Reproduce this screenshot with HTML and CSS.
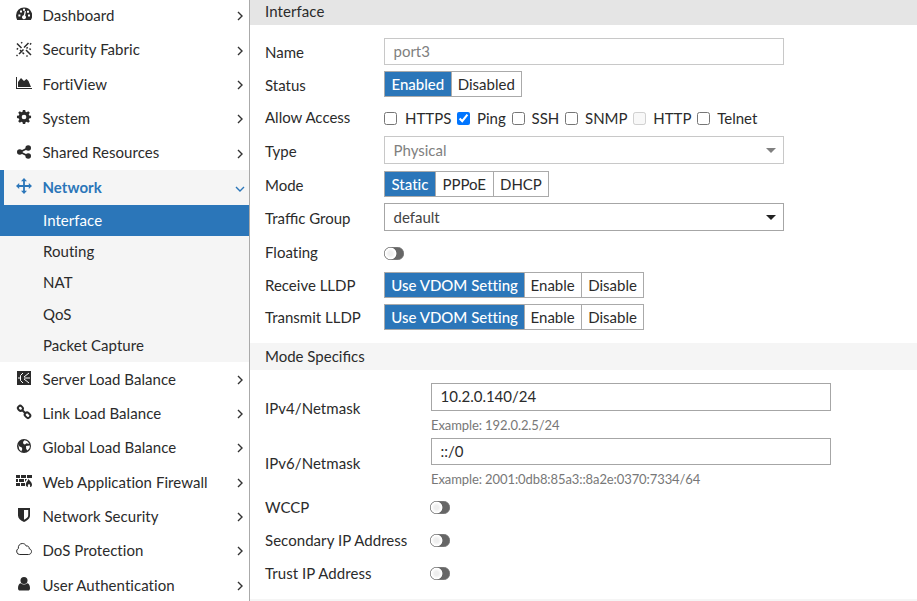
FILE: index.html
```html
<!DOCTYPE html>
<html lang="en">
<head>
<meta charset="utf-8">
<title>Interface</title>
<link rel="stylesheet" href="styles.css">
</head>
<body>
<div class="app">
<nav class="sidebar">
  <a class="item"><svg class="icon" viewBox="0 0 16 16"><path fill-rule="evenodd" d="M8 1.500a8 8 0 0 0-8 8c0 1.700.4 3.100 1.200 4.500h13.600A8 8 0 0 0 8 1.500zM2.400 8.400h2v2h-2zM4 4.500h2v2H4zM7 2.800h2v2H7zM11 4.800h2v2h-2zM12 8.600h2v2h-2zM8.700 5l1.300.3-.9 4.200a2 2 0 1 1-1.300-.3z"/></svg><span class="text">Dashboard</span><svg class="chev" viewBox="0 0 8 10"><path d="M2 1l4 4-4 4"/></svg></a>
  <a class="item"><svg class="icon line" viewBox="0 0 16 16"><path d="M1 2.500l4.500 4.500M8 6.500l4.500-4.500M10 9l5 5M3 13l4.500-4.500M5.200 1.200l1 1M14 3.500l1.200-1.200M.8 8.500l1.200-1.200M10.500 7.500l1.200-1.200M13.500 7.500l1.200 1.200M4 10l1-1M6.500 11.500l1.500 1.500M10.500 14.500l1 1M.5 15l1-1"/></svg><span class="text">Security Fabric</span><svg class="chev" viewBox="0 0 8 10"><path d="M2 1l4 4-4 4"/></svg></a>
  <a class="item"><svg class="icon" viewBox="0 0 16 16"><path d="M0 2h1v11h15v1H0zM2 12V7l3-4 3 3 2.500-2 2 2L15 12z"/></svg><span class="text">FortiView</span><svg class="chev" viewBox="0 0 8 10"><path d="M2 1l4 4-4 4"/></svg></a>
  <a class="item"><svg class="icon" viewBox="0 0 16 16"><path fill-rule="evenodd" d="M6.800 1h2.400l.4 2 1.200.5 1.700-1.200 1.700 1.700L13 5.700l.5 1.200 2 .4v2.400l-2 .4-.5 1.200 1.200 1.700-1.700 1.700-1.700-1.200-1.200.5-.4 2H6.800l-.4-2-1.200-.5-1.700 1.200L1.800 13 3 11.300l-.5-1.200-2-.4V7.300l2-.4L3 5.700 1.800 4l1.700-1.700 1.700 1.200L6.400 3zM8 6a2.500 2.500 0 1 0 0 5 2.500 2.500 0 0 0 0-5z" transform="translate(.5 0) scale(.94)"/></svg><span class="text">System</span><svg class="chev" viewBox="0 0 8 10"><path d="M2 1l4 4-4 4"/></svg></a>
  <a class="item"><svg class="icon" viewBox="0 0 16 16"><circle cx="3.800" cy="8" r="2.800"/><circle cx="12.200" cy="4" r="2.800"/><circle cx="12.200" cy="12" r="2.800"/><path class="bar" d="M12 4L4 8l8 4"/></svg><span class="text">Shared Resources</span><svg class="chev" viewBox="0 0 8 10"><path d="M2 1l4 4-4 4"/></svg></a>
  <a class="item current"><svg class="icon" viewBox="0 0 16 16"><path d="M8 0l3 3.200H8.900v3.900h3.900V5L16 8l-3.200 3V8.900H8.900v3.900H11L8 16l-3-3.200h2.100V8.900H3.200V11L0 8l3.200-3v2.100h3.900V3.200H5z"/></svg><span class="text">Network</span><svg class="chev down" viewBox="0 0 10 8"><path d="M1 2l4 4 4-4"/></svg></a>
  <div class="sub">
    <a class="subitem active">Interface</a>
    <a class="subitem">Routing</a>
    <a class="subitem">NAT</a>
    <a class="subitem">QoS</a>
    <a class="subitem">Packet Capture</a>
  </div>
  <a class="item"><svg class="icon" viewBox="0 0 16 16"><path d="M1 1h14v14H1z"/><path class="cut" d="M2 8h2M8 8h6M8 7l5-4M8 9l5 4M7 3L4.500 5.500v5L7 13"/></svg><span class="text">Server Load Balance</span><svg class="chev" viewBox="0 0 8 10"><path d="M2 1l4 4-4 4"/></svg></a>
  <a class="item"><svg class="icon ring" viewBox="0 0 16 16"><rect x="-2.500" y="-2.200" width="5" height="4.400" rx="2" transform="translate(4.400 4.300) rotate(45)"/><rect x="-2.900" y="-2.200" width="5.800" height="4.400" rx="2" transform="translate(11.500 11.200) rotate(45)"/><path d="M6 6l4 3.800"/></svg><span class="text">Link Load Balance</span><svg class="chev" viewBox="0 0 8 10"><path d="M2 1l4 4-4 4"/></svg></a>
  <a class="item"><svg class="icon" viewBox="0 0 16 16"><circle cx="8" cy="8" r="7"/><path class="land" d="M8.500 2.200l2.500.7 2.300 2.600-1 .3-1.800-.6-1.500 1.300-1.500-.5-.5-2zM2.200 6l1 2.300 2.600 1.200.5 1.500-1 2.400-2.100-2.200zM10 8l3.900-.6-.3 2.600-2 2.600-1.400-1.600z"/></svg><span class="text">Global Load Balance</span><svg class="chev" viewBox="0 0 8 10"><path d="M2 1l4 4-4 4"/></svg></a>
  <a class="item"><svg class="icon" viewBox="0 0 16 16"><path d="M0 2h4v3H0zM5 2h5v3H5zM11 2h5v3h-5zM0 6h2v3H0zM3 6h5v3H3zM0 10h4v3H0zM5 10h4v3H5zM9 6h2l-2 3z"/><path fill-rule="evenodd" d="M12.500 5.500c.3 2 3.500 3.300 3.500 6.200 0 1.500-.9 2.300-2 2.300.5-1.200 0-2.400-1-3.200-1 1-1.500 2-1 3.200-1.300-.2-2.200-1-2.200-2.500 0-2.500 2.500-3.500 2.700-6z"/></svg><span class="text">Web Application Firewall</span><svg class="chev" viewBox="0 0 8 10"><path d="M2 1l4 4-4 4"/></svg></a>
  <a class="item"><svg class="icon" viewBox="0 0 16 16"><path fill-rule="evenodd" d="M2 1h12v7.500c0 3-2.500 5-6 6.500-3.500-1.500-6-3.500-6-6.500zM8 3v9.800c2.500-1.200 4.200-2.500 4.200-4.500V3z"/></svg><span class="text">Network Security</span><svg class="chev" viewBox="0 0 8 10"><path d="M2 1l4 4-4 4"/></svg></a>
  <a class="item"><svg class="icon cloud" viewBox="0 0 16 16"><path d="M3.800 13.500a3.200 3.200 0 0 1-1.500-6C2 4.500 4 2.500 6.300 2.500c1.900 0 3.400 1 4 2.600 1.700-.5 3.100.8 2.800 2.500 1.400.4 2.400 1.500 2.400 2.900 0 1.700-1.300 3-3 3z"/></svg><span class="text">DoS Protection</span><svg class="chev" viewBox="0 0 8 10"><path d="M2 1l4 4-4 4"/></svg></a>
  <a class="item"><svg class="icon" viewBox="0 0 16 16"><circle cx="8" cy="4.500" r="3.500"/><path d="M4.800 7.200c1.800 1.700 4.600 1.700 6.400 0 2 .4 2.800 2.500 2.800 5 0 1.500-.8 2.300-2 2.300H4c-1.200 0-2-.8-2-2.300 0-2.500.8-4.600 2.800-5z"/></svg><span class="text">User Authentication</span><svg class="chev" viewBox="0 0 8 10"><path d="M2 1l4 4-4 4"/></svg></a>
</nav>
<main class="main">
  <h1 class="title">Interface</h1>
  <form class="form">
    <div class="row"><label class="label">Name</label><div class="box short muted">port3</div></div>
    <div class="row"><label class="label">Status</label><div class="group raised"><span class="opt on">Enabled</span><span class="opt">Disabled</span></div></div>
    <div class="row"><label class="label high">Allow Access</label><div class="checks">
      <label class="check"><input type="checkbox">HTTPS</label>
      <label class="check"><input type="checkbox" checked>Ping</label>
      <label class="check"><input type="checkbox">SSH</label>
      <label class="check"><input type="checkbox">SNMP</label>
      <label class="check"><input type="checkbox" disabled>HTTP</label>
      <label class="check"><input type="checkbox">Telnet</label>
    </div></div>
    <div class="row"><label class="label">Type</label><div class="box muted select raised">Physical<i class="caret"></i></div></div>
    <div class="row mode"><label class="label">Mode</label><div class="group"><span class="opt on">Static</span><span class="opt">PPPoE</span><span class="opt">DHCP</span></div></div>
    <div class="row"><label class="label liga">Traffic Group</label><div class="box select soft raised">default<i class="caret"></i></div></div>
    <div class="row floating"><label class="label">Floating</label><span class="toggle"></span></div>
    <div class="row lldp"><label class="label high">Receive LLDP</label><div class="group"><span class="opt on">Use VDOM Setting</span><span class="opt">Enable</span><span class="opt">Disable</span></div></div>
    <div class="row lldp"><label class="label high">Transmit LLDP</label><div class="group"><span class="opt on">Use VDOM Setting</span><span class="opt">Enable</span><span class="opt">Disable</span></div></div>
  </form>
  <h2 class="subtitle liga">Mode Specifics</h2>
  <form class="form specifics">
    <div class="row address"><label class="label">IPv4/Netmask</label><div class="field"><div class="box value">10.2.0.140/24</div><p class="hint">Example: 192.0.2.5/24</p></div></div>
    <div class="row address v6"><label class="label">IPv6/Netmask</label><div class="field"><div class="box short">::/0</div><p class="hint">Example: 2001:0db8:85a3::8a2e:0370:7334/64</p></div></div>
    <div class="row"><label class="label high">WCCP</label><span class="toggle"></span></div>
    <div class="row"><label class="label high">Secondary IP Address</label><span class="toggle"></span></div>
    <div class="row"><label class="label high">Trust IP Address</label><span class="toggle"></span></div>
  </form>
  <div class="footer"></div>
</main>
</div>
</body>
</html>
```
FILE: styles.css
```css
* { box-sizing: border-box; }
body { margin: 0; background: #fff; color: #2b2b2b; font: 15px/20px Lato, "Liberation Sans", sans-serif; font-variant-ligatures: none; }
.liga { font-variant-ligatures: common-ligatures; }
.app { display: flex; height: 601px; overflow: hidden; }

.sidebar { width: 250px; flex: none; border-right: 1px solid #aaa; margin-top: -2px; }
.item { display: flex; align-items: center; height: 34.35px; padding: 0 5px 0 16px; }
.icon { width: 16px; height: 16px; margin-right: 10.5px; margin-top: -2px; fill: #2b2b2b; flex: none; }
.item .text { flex: 1; padding-bottom: .12px; letter-spacing: .05px; }
.chev { width: 8px; height: 10px; margin-top: 2px; fill: none; stroke: #333; stroke-width: 1.4; }
.chev.down { width: 10px; height: 8px; margin-top: 3px; margin-right: -1px; stroke: #2b76b9; }
.icon.line { fill: none; stroke: #2b2b2b; stroke-width: 1.5; }
.icon .bar { fill: none; stroke: #2b2b2b; stroke-width: 1.8; }
.icon .cut { fill: none; stroke: #fff; stroke-width: 1; }
.icon.ring { fill: none; stroke: #2b2b2b; stroke-width: 2; }
.icon .land { fill: #fff; }
.icon.cloud { fill: none; stroke: #2b2b2b; stroke-width: 1; }
.current { height: 35px; padding-left: 12px; border-left: 4px solid #2b76b9; background: #f5f5f5; color: #2b76b9; font-weight: 700; }
.current .icon { fill: #2b76b9; }
.sub { padding-bottom: .35px; background: #f5f5f5; }
.subitem { display: block; height: 31.3px; padding-left: 43px; line-height: 31.3px; letter-spacing: .05px; }
.subitem.active { background: #2b76b9; color: #fff; }

.main { flex: 1; }
.title, .subtitle { margin: 0; padding-left: 15px; font-size: 15px; font-weight: 400; }
.title { height: 25px; line-height: 23px; background: #e5e5e5; letter-spacing: .08px; }
.subtitle { height: 27px; line-height: 27px; background: #f5f5f5; }
.form { padding: 10px 0 10px 15px; }
.row { display: flex; align-items: center; height: 33px; }
.label { width: 119px; flex: none; padding-top: 1px; }
.label.high { padding: 0 0 1px; }
.mode { height: 34px; }
.floating { height: 35px; }
.lldp { height: 32px; }
.box { width: 400px; height: 28px; padding: 0 9px 0 8.500px; border: 1px solid #a6a6a6; line-height: 26px; }
.box.short { height: 27px; line-height: 25px; }
.box.value { line-height: 25px; }
.raised { margin-bottom: 2px; }
.muted { border-color: #c8c8c8; color: #808080; }
.soft { color: #444; }
.select { display: flex; align-items: center; justify-content: space-between; padding-right: 7px; }
.caret { margin-top: 2px; border: 5px solid transparent; border-top: 5px solid #222; border-bottom: 0; }
.muted .caret { border-top-color: #808080; }
.group { display: flex; height: 26px; border: 1px solid #aaa; }
.opt { padding: 0 6.500px 0 6px; line-height: 25px; }
.opt + .opt { border-left: 1px solid #aaa; }
.opt.on { padding: 0 6.500px; background: #2b76b9; color: #fff; font-weight: 500; }
.mode .opt:nth-child(2) { padding: 0 7px 0 6.500px; }
.lldp .opt { padding: 0 6px; }
.lldp .opt.on { padding: 0 5.700px 0 6.300px; }
.lldp .opt:last-child { padding: 0 6.500px; }
.checks { display: flex; gap: 5.750px; }
.check { display: flex; align-items: center; }
.check input { width: 13px; height: 13px; margin: 1px 7px 0 0; }
.check:first-child input { margin-right: 8px; }
.toggle { width: 20px; height: 13px; border-radius: 7px; background: radial-gradient(circle at 6.500px 6.500px, #eee 0 2px, #fff 5px, #fff 5.500px, #666 6.300px); box-shadow: inset 0 0 0 .5px #888; }
.floating .toggle { margin-top: 3px; }

.specifics { padding-top: 13px; }
.specifics .label { width: 166px; letter-spacing: .05px; }
.specifics .toggle { margin-left: -1px; }
.address { height: 55px; align-items: flex-start; }
.address .label { padding-top: 15px; }
.v6 { height: 53px; }
.hint { margin: 0; padding-top: 5px; color: #777; font-size: 13px; line-height: 18px; letter-spacing: -.09px; }
.footer { height: 10px; margin-top: -1px; background: #f5f5f5; }
```
